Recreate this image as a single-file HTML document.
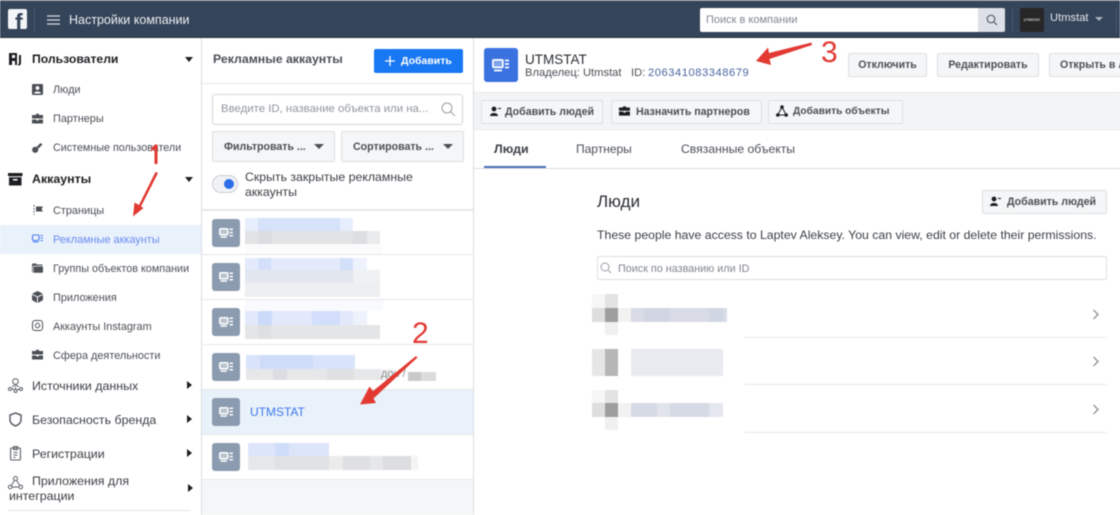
<!DOCTYPE html>
<html lang="ru"><head><meta charset="utf-8"><title>Настройки компании</title>
<style>
*{box-sizing:border-box}
html{background:#fff}
html,body{margin:0;padding:0;width:1120px;height:515px;overflow:hidden}
body{background:#fff;font-family:"Liberation Sans","DejaVu Sans",sans-serif;color:#4b4f56;filter:blur(.4px)}
.a{position:absolute;white-space:nowrap}
.t{position:absolute;white-space:nowrap;font-size:10.9px;line-height:14px;color:#4b4f56}
.h{position:absolute;white-space:nowrap;font-size:12.4px;line-height:16px;color:#3b3f45}
.b{font-weight:bold}
.btn{position:absolute;background:#f5f6f7;border:1px solid #dddfe2;border-radius:2px;font-size:10.6px;font-weight:bold;color:#4b4f56;line-height:24px;white-space:nowrap;overflow:hidden}
.tile{position:absolute;left:212px;width:28px;height:28px;background:#8b9bb0;border-radius:3px}
.tile svg{position:absolute;left:7px;top:9px}
.tri-d{position:absolute;width:0;height:0;border-left:4.5px solid transparent;border-right:4.5px solid transparent;border-top:5px solid #1c1e21}
.tri-r{position:absolute;width:0;height:0;border-top:4.5px solid transparent;border-bottom:4.5px solid transparent;border-left:5px solid #1c1e21}
.ln{position:absolute;background:#e6e8eb}
svg{position:absolute;overflow:visible}
</style></head><body>

<!-- top bar -->
<div class="a" style="left:0;top:0;width:1120px;height:38px;background:#344459;border-top:1px solid #8a8f96;border-bottom:1px solid #28303c"></div>
<div class="a" style="left:8px;top:9px;width:19px;height:20px;background:#f2f4f7;border-radius:2px;overflow:hidden"><div class="a" style="left:7px;top:3px;font:bold 23px/20px 'Liberation Sans',sans-serif;color:#344459">f</div></div>
<div class="a" style="left:34px;top:8px;width:1px;height:23px;background:#4a5a70"></div>
<svg style="left:47px;top:15px" width="14" height="11"><path d="M0 1H13M0 5H13M0 9H13" stroke="#d5dae1" stroke-width="1.2"/></svg>
<div class="a" style="left:69px;top:12px;font-size:12.5px;line-height:16px;color:#eef0f3">Настройки компании</div>
<div class="a" style="left:700px;top:8px;width:279px;height:24px;background:#fff;border-radius:2px 0 0 2px;font-size:11px;line-height:24px;color:#7f8791;padding-left:6px">Поиск в компании</div>
<div class="a" style="left:978px;top:8px;width:27px;height:24px;background:#dde1e7;border-radius:0 2px 2px 0"></div>
<svg style="left:986px;top:14px" width="12" height="12" fill="none" stroke="#5a6068" stroke-width="1.2"><circle cx="5" cy="5" r="3.8"/><path d="M8 8L11 11"/></svg>
<div class="a" style="left:1012px;top:8px;width:1px;height:23px;background:#4a5a70"></div>
<div class="a" style="left:1020px;top:8px;width:24px;height:24px;background:#262626;border-radius:2px;color:#ccc;font:bold 3.6px/24px 'Liberation Sans',sans-serif;text-align:center">UTMSTAT</div>
<div class="a" style="left:1050px;top:11px;font-size:11.2px;line-height:15px;color:#e4e7ec">Utmstat</div>
<div class="tri-d" style="left:1095px;top:17px;border-left-width:4px;border-right-width:4px;border-top:4px solid #a9b2bf"></div>
<div class="a" style="left:1116px;top:8px;width:1px;height:23px;background:#4a5a70"></div>

<!-- sidebar -->
<div class="a" style="left:201px;top:38px;width:1px;height:477px;background:#dddfe2"></div>
<svg style="left:9px;top:52px" width="14" height="14" fill="#1c1e21"><path d="M0 1H8V13H6V9H3V13H0ZM3 3V6H6V3ZM10 3H12V11C12 12.5 11 13.5 9 13.5V12C10 12 10 11.5 10 11Z" fill-rule="evenodd"/></svg>
<div class="h b" style="left:32px;top:51px;font-size:12.2px;color:#1c1e21">Пользователи</div>
<div class="tri-d" style="left:185px;top:57px"></div>

<svg style="left:32px;top:84px" width="11" height="11"><rect width="11" height="11" rx="1" fill="#4b4f56"/><circle cx="5.500" cy="4" r="1.900" fill="#fff"/><path d="M2 9.500C2.500 6.800 8.500 6.800 9 9.500Z" fill="#fff"/></svg>
<div class="t" style="left:53px;top:83px">Люди</div>
<svg style="left:32px;top:113px" width="11" height="11" fill="#4b4f56"><path d="M4 2V0.800H7V2H11V5.500H0V2ZM0 6.500H4.500V7.500H6.500V6.500H11V10.500H0Z"/></svg>
<div class="t" style="left:53px;top:112px">Партнеры</div>
<svg style="left:32px;top:142px" width="11" height="11" fill="#4b4f56"><circle cx="3.200" cy="7.800" r="3.100"/><path d="M4.500 5L8.500 1L10.500 2.500L6.500 6.500Z"/></svg>
<div class="t" style="left:53px;top:141px;font-size:10.75px">Системные пользователи</div>

<svg style="left:8px;top:173px" width="15" height="13" fill="#1c1e21"><path d="M0 0H14.500V3.200H0ZM1 4.200H13.500V12.500H1ZM5 6V7.500H9.500V6Z" fill-rule="evenodd"/></svg>
<div class="h b" style="left:32px;top:171px;font-size:12.4px;color:#1c1e21">Аккаунты</div>
<div class="tri-d" style="left:185px;top:177px"></div>

<svg style="left:33px;top:205px" width="11" height="10" fill="#4b4f56"><path d="M1 0V10" stroke="#4b4f56" stroke-dasharray="1.500 1.500"/><path d="M3 1.500H10L8.500 4L10 6.500H3Z"/></svg>
<div class="t" style="left:53px;top:204px">Страницы</div>

<div class="a" style="left:0;top:225px;width:201px;height:29px;background:#e9f1fb"></div>
<svg style="left:32px;top:234px" width="11" height="10" fill="none" stroke="#4a7cf0" stroke-width="1.100"><rect x=".5" y="1" width="6.500" height="5.500" rx="1"/><path d="M1 8H6.500M8.500 1.500H11M8.500 4H11M8.500 6.500H11"/></svg>
<div class="t" style="left:53px;top:233px;color:#6a8cf0">Рекламные аккаунты</div>

<svg style="left:32px;top:263px" width="11" height="10" fill="#4b4f56"><path d="M0 1.500Q0 .5 1 .5H4L5 1.500H10Q10.500 1.500 10.500 2.200V2.800H1.500L0.800 3.500V9.500H0ZM1.500 3.500H11V9Q11 9.800 10 9.800H1.500Z"/></svg>
<div class="t" style="left:53px;top:262px;font-size:10.8px">Группы объектов компании</div>
<svg style="left:32px;top:291px" width="11" height="12" fill="#4b4f56"><path d="M5.500 0L11 2.800L5.500 5.500L0 2.800ZM0 3.800L5 6.300V12L0 9ZM11 3.800L6 6.300V12L11 9Z"/></svg>
<div class="t" style="left:53px;top:291px">Приложения</div>
<svg style="left:32px;top:320px" width="11" height="11" fill="none" stroke="#4b4f56" stroke-width="1"><rect x=".5" y=".5" width="10" height="10" rx="2.500"/><circle cx="5.500" cy="5.500" r="2.200"/></svg>
<div class="t" style="left:53px;top:320px">Аккаунты Instagram</div>
<svg style="left:32px;top:349px" width="11" height="11" fill="#4b4f56"><path d="M4 2V0.800H7V2H11V5.500H0V2ZM0 6.500H4.500V7.500H6.500V6.500H11V10.500H0Z"/></svg>
<div class="t" style="left:53px;top:349px">Сфера деятельности</div>

<svg style="left:8px;top:378px" width="15" height="15" fill="none" stroke="#5a5f66" stroke-width="1"><circle cx="7.500" cy="3.500" r="2.800"/><path d="M4.500 9C5 7 10 7 10.500 9"/><circle cx="2" cy="11" r="1.500"/><circle cx="7.500" cy="13" r="1.500"/><circle cx="13" cy="11" r="1.500"/><path d="M3.500 11H6M9 11.500H11.500M7.500 9V11.500"/></svg>
<div class="h" style="left:32px;top:378px">Источники данных</div>
<div class="tri-r" style="left:187px;top:381px"></div>
<svg style="left:9px;top:412px" width="13" height="15" fill="none" stroke="#5a5f66" stroke-width="1.500"><path d="M6.500 1L12 3V8C12 11 9 13 6.500 14C4 13 1 11 1 8V3Z"/></svg>
<div class="h" style="left:32px;top:412px">Безопасность бренда</div>
<div class="tri-r" style="left:187px;top:415px"></div>
<svg style="left:10px;top:446px" width="11" height="15" fill="none" stroke="#5a5f66" stroke-width="1.100"><rect x=".6" y="2" width="9.800" height="12" rx="1"/><rect x="3.500" y=".6" width="4" height="3"/><path d="M3.500 6.500H7.500M3.500 9H7.500M3.500 11.500H5.500"/></svg>
<div class="h" style="left:32px;top:446px">Регистрации</div>
<div class="tri-r" style="left:187px;top:449px"></div>
<svg style="left:8px;top:476px" width="15" height="14" fill="none" stroke="#5a5f66" stroke-width="1"><circle cx="7.500" cy="2.500" r="2"/><circle cx="2.200" cy="11" r="1.800"/><circle cx="12.800" cy="11" r="1.800"/><path d="M6.500 4.500L3.200 9.500M8.500 4.500L11.800 9.500M4 11H11"/></svg>
<div class="h" style="left:32px;top:473px">Приложения для</div>
<div class="h" style="left:9px;top:488px">интеграции</div>
<div class="tri-r" style="left:188px;top:484px"></div>
<div class="a" style="left:8px;top:510px;width:183px;height:1px;background:#e3e4e6"></div>

<!-- middle -->
<div class="a" style="left:473px;top:38px;width:1px;height:477px;background:#dddfe2"></div>
<div class="h b" style="left:213px;top:51px;font-size:12.3px;color:#4b4f56">Рекламные аккаунты</div>
<div class="a" style="left:374px;top:49px;width:89px;height:24px;background:#1877f2;border-radius:2px"></div>
<svg style="left:384px;top:55px" width="12" height="12"><path d="M6 1V11M1 6H11" stroke="#fff" stroke-width="1.300"/></svg>
<div class="a b" style="left:401px;top:54px;font-size:10.5px;line-height:14px;color:#fff">Добавить</div>
<div class="ln" style="left:202px;top:83px;width:271px;height:1px"></div>
<div class="a" style="left:212px;top:94px;width:251px;height:31px;border:1px solid #d3d6db;border-radius:3px;font-size:11.4px;line-height:29px;color:#90959c;padding-left:8px">Введите ID, название объекта или на...</div>
<svg style="left:441px;top:102px" width="15" height="15" fill="none" stroke="#9a9fa6" stroke-width="1"><circle cx="6" cy="6" r="5"/><path d="M9.500 9.500L14 14"/></svg>
<div class="btn" style="left:212px;top:131px;width:123px;height:31px;line-height:30px;padding-left:11px">Фильтровать ...</div>
<div class="tri-d" style="left:314px;top:144px;border-left-width:5px;border-right-width:5px;border-top:5px solid #4b4f56"></div>
<div class="btn" style="left:341px;top:131px;width:123px;height:31px;line-height:30px;padding-left:11px">Сортировать ...</div>
<div class="tri-d" style="left:443px;top:144px;border-left-width:5px;border-right-width:5px;border-top:5px solid #4b4f56"></div>
<div class="a" style="left:212px;top:175px;width:26px;height:18px;background:#f0f2f5;border:1px solid #ccd0d5;border-radius:9px"></div>
<div class="a" style="left:224px;top:179px;width:10px;height:10px;background:#2a6ee8;border-radius:50%"></div>
<div class="a" style="left:245px;top:170px;font-size:12.3px;line-height:15px;color:#3b3f45">Скрыть закрытые рекламные<br>аккаунты</div>
<div class="ln" style="left:202px;top:209px;width:271px;height:2px"></div>

<!-- list rows -->
<div class="ln" style="left:202px;top:254px;width:271px;height:1px"></div>
<div class="ln" style="left:202px;top:299px;width:271px;height:1px"></div>
<div class="ln" style="left:202px;top:344px;width:271px;height:1px"></div>
<div class="a" style="left:202px;top:390px;width:271px;height:45px;background:#e9f1fb"></div>
<div class="ln" style="left:202px;top:389px;width:271px;height:1px"></div>
<div class="ln" style="left:202px;top:434px;width:271px;height:1px"></div>
<div class="ln" style="left:202px;top:479px;width:271px;height:1px"></div>
<div class="a" style="left:202px;top:480px;width:271px;height:35px;background:#f5f6f7"></div>

<!-- pixelated blur, middle list -->
<svg style="left:0;top:0" width="1120" height="515" shape-rendering="crispEdges">
<g>
<rect x="245" y="218" width="108" height="13" fill="#d6e2fa"/><rect x="245" y="218" width="13" height="13" fill="#e6eefc"/><rect x="340" y="218" width="13" height="13" fill="#e6eefc"/>
<rect x="245" y="231" width="135" height="13" fill="#e2e3e5"/><rect x="258" y="231" width="14" height="13" fill="#dcdde0"/><rect x="353" y="231" width="14" height="13" fill="#dcdee1"/><rect x="367" y="231" width="13" height="13" fill="#eaebed"/>
<rect x="245" y="244" width="138" height="10" fill="#fbfbfb"/>
<rect x="245" y="258" width="122" height="12" fill="#e3eafb"/><rect x="258" y="258" width="13" height="12" fill="#d4e0fa"/><rect x="340" y="258" width="13" height="12" fill="#d3e0fa"/><rect x="353" y="258" width="14" height="12" fill="#edf2fd"/>
<rect x="245" y="270" width="108" height="13" fill="#e2e6ee"/><rect x="353" y="270" width="27" height="13" fill="#f0f1f2"/>
<rect x="245" y="283" width="135" height="14" fill="#eeeff0"/>
<rect x="245" y="300" width="138" height="11" fill="#f9fafd"/>
<rect x="245" y="311" width="122" height="14" fill="#e1e9fb"/><rect x="258" y="311" width="14" height="14" fill="#ccdafa"/><rect x="312" y="311" width="28" height="14" fill="#d2defa"/><rect x="353" y="311" width="14" height="14" fill="#eef2fd"/>
<rect x="245" y="325" width="135" height="14" fill="#e4e5e7"/><rect x="258" y="325" width="13" height="14" fill="#dedfe1"/>
<rect x="246" y="355" width="109" height="14" fill="#d9e4fb"/><rect x="260" y="355" width="53" height="14" fill="#cfdcf9"/>
<rect x="246" y="369" width="135" height="11" fill="#e6e7e9"/><rect x="273" y="369" width="14" height="11" fill="#dcdde0"/><rect x="327" y="369" width="27" height="11" fill="#dfe0e2"/>
<rect x="381" y="369" width="13" height="11" fill="#f2f2f3"/>
<rect x="408" y="372" width="13" height="9" fill="#c9cacc"/><rect x="421" y="372" width="15" height="9" fill="#dcdcde"/>
<rect x="248" y="443" width="81" height="13" fill="#dde5fb"/><rect x="275" y="443" width="14" height="13" fill="#cfdcfa"/>
<rect x="248" y="456" width="163" height="14" fill="#e6e7e9"/><rect x="275" y="456" width="54" height="14" fill="#e0e1e3"/><rect x="329" y="456" width="14" height="14" fill="#ececed"/><rect x="343" y="456" width="27" height="14" fill="#dfe0e2"/><rect x="383" y="456" width="28" height="14" fill="#dcdddf"/><rect x="411" y="456" width="7" height="14" fill="#f4f4f5"/>
</g>
<!-- right list blur -->
<g>
<rect x="592" y="294" width="13" height="14" fill="#f6f6f6"/><rect x="605" y="294" width="13" height="14" fill="#e3e3e3"/>
<rect x="592" y="308" width="13" height="14" fill="#dedede"/><rect x="605" y="308" width="13" height="14" fill="#9e9e9e"/><rect x="618" y="308" width="13" height="14" fill="#f2f2f2"/>
<rect x="631" y="308" width="96" height="14" fill="#d9dce6"/><rect x="644" y="308" width="26" height="14" fill="#d2d6e3"/><rect x="709" y="308" width="14" height="14" fill="#d0d6e2"/>
<rect x="605" y="322" width="13" height="13" fill="#f0f0f0"/>
<rect x="592" y="349" width="13" height="27" fill="#e6e6e6"/><rect x="605" y="349" width="13" height="27" fill="#b6b6b6"/>
<rect x="631" y="349" width="92" height="27" fill="#e9eaf0"/>
<rect x="592" y="390" width="13" height="13" fill="#f6f6f6"/><rect x="605" y="390" width="13" height="13" fill="#e3e3e3"/>
<rect x="592" y="403" width="13" height="14" fill="#dedede"/><rect x="605" y="403" width="13" height="14" fill="#9e9e9e"/><rect x="618" y="403" width="13" height="14" fill="#f2f2f2"/>
<rect x="631" y="403" width="92" height="14" fill="#d6dae5"/><rect x="657" y="403" width="13" height="14" fill="#e2e4ec"/><rect x="709" y="403" width="14" height="14" fill="#e4e6f0"/>
<rect x="605" y="417" width="13" height="13" fill="#f0f0f0"/>
</g>
</svg>

<div class="tile" style="top:219px"><svg width="14" height="10" fill="none" stroke="#fff" stroke-width="1.500"><rect x=".8" y=".8" width="8" height="6" rx="1" fill="#fff" fill-opacity=".4"/><path d="M1.500 9H8M10.500 1.200H14M10.500 4.500H14M10.500 7.800H14"/></svg></div>
<div class="tile" style="top:263px"><svg width="14" height="10" fill="none" stroke="#fff" stroke-width="1.500"><rect x=".8" y=".8" width="8" height="6" rx="1" fill="#fff" fill-opacity=".4"/><path d="M1.500 9H8M10.500 1.200H14M10.500 4.500H14M10.500 7.800H14"/></svg></div>
<div class="tile" style="top:308px"><svg width="14" height="10" fill="none" stroke="#fff" stroke-width="1.500"><rect x=".8" y=".8" width="8" height="6" rx="1" fill="#fff" fill-opacity=".4"/><path d="M1.500 9H8M10.500 1.200H14M10.500 4.500H14M10.500 7.800H14"/></svg></div>
<div class="tile" style="top:353px"><svg width="14" height="10" fill="none" stroke="#fff" stroke-width="1.500"><rect x=".8" y=".8" width="8" height="6" rx="1" fill="#fff" fill-opacity=".4"/><path d="M1.500 9H8M10.500 1.200H14M10.500 4.500H14M10.500 7.800H14"/></svg></div>
<div class="tile" style="top:398px"><svg width="14" height="10" fill="none" stroke="#fff" stroke-width="1.500"><rect x=".8" y=".8" width="8" height="6" rx="1" fill="#fff" fill-opacity=".4"/><path d="M1.500 9H8M10.500 1.200H14M10.500 4.500H14M10.500 7.800H14"/></svg></div>
<div class="tile" style="top:443px"><svg width="14" height="10" fill="none" stroke="#fff" stroke-width="1.500"><rect x=".8" y=".8" width="8" height="6" rx="1" fill="#fff" fill-opacity=".4"/><path d="M1.500 9H8M10.500 1.200H14M10.500 4.500H14M10.500 7.800H14"/></svg></div>
<div class="a" style="left:381px;top:367px;font-size:11px;line-height:14px;color:#8b8d91">дон /</div>
<div class="a" style="left:250px;top:405px;font-size:12px;line-height:15px;color:#3f78ee">UTMSTAT</div>

<!-- right header -->
<div class="a" style="left:484px;top:48px;width:34px;height:34px;background:#3a72e0;border-radius:3px"></div>
<svg style="left:492px;top:59px" width="18" height="14" fill="none" stroke="#fff" stroke-width="1.700"><rect x=".9" y=".9" width="10" height="7.500" rx="1.200" fill="#fff" fill-opacity=".35"/><path d="M2 11.500H10M13 1.500H17M13 5H17M13 8.500H17"/></svg>
<div class="a" style="left:525px;top:51px;font-size:13.5px;line-height:17px;color:#2b2e33">UTMSTAT</div>
<div class="a" style="left:525px;top:66px;font-size:11.2px;line-height:15px;color:#4b4f56">Владелец: Utmstat</div>
<div class="a" style="left:631px;top:66px;font-size:11.2px;line-height:15px;color:#4b4f56">ID:</div>
<div class="a" style="left:648px;top:66px;font-size:11.2px;line-height:15px;color:#4a64a0;letter-spacing:.53px">206341083348679</div>
<div class="btn" style="left:848px;top:53px;width:79px;height:24px;line-height:22px;text-align:center">Отключить</div>
<div class="btn" style="left:937px;top:53px;width:102px;height:24px;line-height:22px;text-align:center">Редактировать</div>
<div class="btn" style="left:1049px;top:53px;width:80px;height:24px;line-height:22px;padding-left:10px">Открыть в А</div>

<div class="a" style="left:474px;top:92px;width:646px;height:38px;background:#f3f4f6;border-top:1px solid #e6e8eb;border-bottom:1px solid #e6e8eb"></div>
<div class="btn" style="left:481px;top:100px;width:122px;height:24px;line-height:22px;padding-left:23px">Добавить людей</div>
<svg style="left:490px;top:106px" width="11" height="11" fill="#1c1e21"><circle cx="4" cy="3" r="2.400"/><path d="M0 10C0 6 8 6 8 10ZM8 2H11V3H8Z"/></svg>
<div class="btn" style="left:611px;top:100px;width:151px;height:24px;line-height:22px;padding-left:24px">Назначить партнеров</div>
<svg style="left:619px;top:106px" width="11" height="10" fill="#1c1e21"><path d="M4 1.500V0.400H7V1.500H11V4.800H0V1.500ZM0 5.600H4.500V6.600H6.500V5.600H11V9.600H0Z"/></svg>
<div class="btn" style="left:768px;top:100px;width:135px;height:24px;line-height:22px;padding-left:24px;font-size:10.2px">Добавить объекты</div>
<svg style="left:776px;top:105px" width="12" height="12" fill="#1c1e21" stroke="#1c1e21"><circle cx="6" cy="2" r="1.300"/><circle cx="1.800" cy="10" r="1.300"/><circle cx="10.200" cy="10" r="1.300"/><path d="M5.500 3L2 9.500M6.500 3L10 9.500M2 10H10" fill="none"/></svg>

<div class="a b" style="left:494px;top:142px;font-size:12.4px;line-height:15px;color:#3b3f45">Люди</div>
<div class="a" style="left:576px;top:142px;font-size:12px;line-height:15px;color:#4b4f56">Партнеры</div>
<div class="a" style="left:681px;top:142px;font-size:12.2px;line-height:15px;color:#4b4f56">Связанные объекты</div>
<div class="a" style="left:484px;top:166px;width:62px;height:3px;background:#4a6fb5"></div>
<div class="a" style="left:474px;top:168px;width:646px;height:1px;background:#dddfe2"></div>

<!-- people -->
<div class="a" style="left:597px;top:192px;font-size:17px;line-height:20px;color:#2b2e33">Люди</div>
<div class="btn" style="left:982px;top:190px;width:125px;height:24px;line-height:22px;padding-left:24px">Добавить людей</div>
<svg style="left:990px;top:196px" width="11" height="11" fill="#1c1e21"><circle cx="4" cy="3" r="2.400"/><path d="M0 10C0 6 8 6 8 10ZM8 2H11V3H8Z"/></svg>
<div class="a" style="left:597px;top:227px;font-size:12.27px;line-height:16px;color:#3b3f45">These people have access to Laptev Aleksey. You can view, edit or delete their permissions.</div>
<div class="a" style="left:597px;top:256px;width:510px;height:24px;border:1px solid #dddfe2;border-radius:2px;font-size:10.8px;line-height:25px;color:#80858c;padding-left:20px">Поиск по названию или ID</div>
<svg style="left:600px;top:262px" width="12" height="12" fill="none" stroke="#9a9fa6" stroke-width="1"><circle cx="5" cy="5" r="4"/><path d="M8 8L11 11"/></svg>
<div class="ln" style="left:744px;top:337px;width:363px;height:1px;background:#eaebf0"></div>
<div class="ln" style="left:744px;top:384px;width:363px;height:1px;background:#eaebf0"></div>
<div class="ln" style="left:744px;top:432px;width:363px;height:1px;background:#eaebf0"></div>
<svg style="left:1092px;top:309px" width="8" height="11" fill="none" stroke="#8d9098" stroke-width="1.300"><path d="M1.500 1L6 5.500L1.500 10"/></svg>
<svg style="left:1092px;top:356px" width="8" height="11" fill="none" stroke="#8d9098" stroke-width="1.300"><path d="M1.500 1L6 5.500L1.500 10"/></svg>
<svg style="left:1092px;top:404px" width="8" height="11" fill="none" stroke="#8d9098" stroke-width="1.300"><path d="M1.500 1L6 5.500L1.500 10"/></svg>

<!-- annotations -->
<svg style="left:0;top:0" width="1120" height="515" fill="#e23a33">
<path d="M155 144.500L157.500 144.500L157.500 164L154.500 164L154.500 149L151 151.500L151 148.500Z"/>
<path d="M158 173L155.500 172L139 205L134.500 202.500L133 216.500L143.500 208L141 206.500Z"/>
<path d="M417.500 357.500L416 356L373 391L369.500 386.500L360 404.500L376 403L373.500 398.500Z"/>
<path d="M812 45L811.500 42.500L769 53L768 47.500L756 61L771 65L769.500 59Z"/>
</svg>
<div class="a" style="left:412px;top:317px;font-size:30px;line-height:34px;color:#e23a33">2</div>
<div class="a" style="left:821px;top:36px;font-size:30px;line-height:34px;color:#e23a33">3</div>
</body></html>
